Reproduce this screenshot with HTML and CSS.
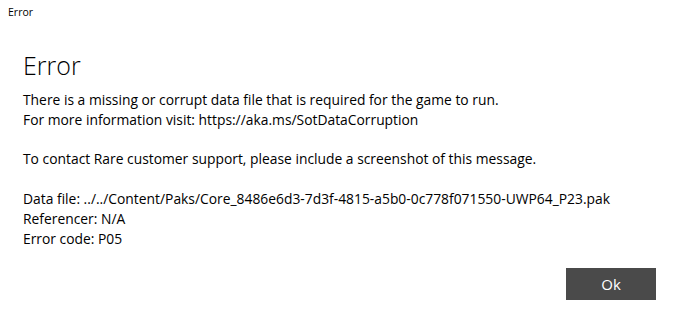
FILE: index.html
```html
<!DOCTYPE html>
<html>
<head>
    <title>Error</title>
    <link rel="stylesheet" href="styles.css">
</head>
<body>
<div class="titlebar">Error</div>
<div class="dialog">
    <h1>Error</h1>
    <div class="message">
        <p>There is a missing or corrupt data file that is required for the game to run.<br>
        For more information visit: https://aka.ms/SotDataCorruption</p>
        <p>To contact Rare customer support, please include a screenshot of this message.</p>
        <p>Data file: ../../Content/Paks/Core_8486e6d3-7d3f-4815-a5b0-0c778f071550-UWP64_P23.pak<br>
        Referencer: N/A<br>
        Error code: P05</p>
    </div>
    <div class="buttons">
        <button type="button" class="ok">Ok</button>
    </div>
</div>
</body>
</html>
```

FILE: styles.css
```css
html, body {
    margin: 0;
    padding: 0;
    background-color: #ffffff;
    color: #000000;
    font-family: "Open Sans", Arial, sans-serif;
    width: 680px;
    height: 327px;
    overflow: hidden;
}

.titlebar {
    padding: 5px 0 0 8px;
    height: 20px;
    font-size: 10.5px;
    line-height: 14px;
}

.dialog {
    padding: 0 24px 0 23px;
}

h1 {
    margin: 23px 0 0 0;
    font-size: 25px;
    font-weight: 300;
    line-height: 34px;
}

.message {
    margin-top: 8px;
    font-size: 13.85px;
    line-height: 19.8px;
}

.message p {
    margin: 0 0 19.8px 0;
}

.buttons {
    display: flex;
    justify-content: flex-end;
    margin-top: 5px;
}

.ok {
    width: 90px;
    height: 32px;
    background-color: #4a4a4a;
    color: #ffffff;
    border: none;
    font-family: "Open Sans", Arial, sans-serif;
    font-size: 15px;
    padding: 0;
}
```
